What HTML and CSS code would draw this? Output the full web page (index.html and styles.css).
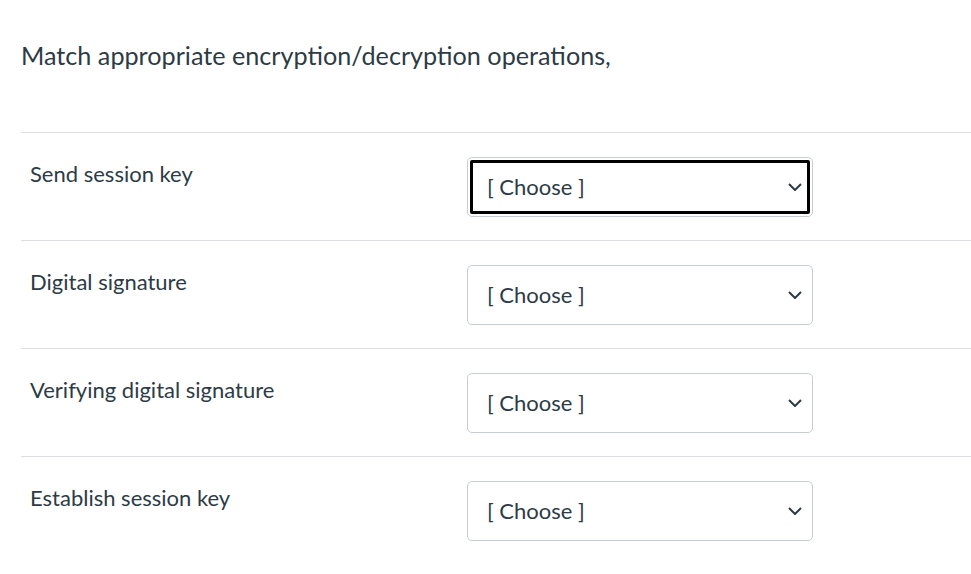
FILE: index.html
```html
<!DOCTYPE html>
<html lang="en">
<head>
    <meta charset="UTF-8">
    <meta name="viewport" content="width=device-width, initial-scale=1.0">
    <title>Matching question</title>
    <link rel="stylesheet" href="styles.css">
</head>
<body>
    <div class="question">
        <p class="question-text">Match appropriate encryption/decryption operations,</p>
        <div class="answers">
            <div class="answer">
                <div class="answer-label">Send session key</div>
                <select class="answer-select focused">
                    <option>[ Choose ]</option>
                </select>
            </div>
            <div class="answer">
                <div class="answer-label">Digital signature</div>
                <select class="answer-select">
                    <option>[ Choose ]</option>
                </select>
            </div>
            <div class="answer">
                <div class="answer-label">Verifying digital signature</div>
                <select class="answer-select">
                    <option>[ Choose ]</option>
                </select>
            </div>
            <div class="answer">
                <div class="answer-label">Establish session key</div>
                <select class="answer-select">
                    <option>[ Choose ]</option>
                </select>
            </div>
        </div>
    </div>
</body>
</html>
```

FILE: styles.css
```css
body {
    font-family: Lato, "Liberation Sans", sans-serif;
    color: #2d3b45;
    background-color: #fff;
    margin: 0;
    padding: 0;
}
.question {
    padding-left: 21px;
}
.question-text {
    font-size: 25.2px;
    margin: 0;
    padding-top: 40px;
    height: 132px;
    box-sizing: border-box;
}
.answers {
    margin-right: -10px;
}
.answer {
    display: flex;
    height: 108px;
    box-sizing: border-box;
    border-top: 1px solid #dcdfe2;
}
.answer-label {
    width: 446px;
    padding: 27px 0 0 9px;
    box-sizing: border-box;
    font-size: 22px;
}
.answer-select {
    appearance: none;
    margin-top: 24px;
    width: 346px;
    height: 60px;
    padding: 0 40px 2px 19px;
    font-family: Lato, "Liberation Sans", sans-serif;
    font-size: 22px;
    color: #2d3b45;
    background-color: #fff;
    border: 1px solid #c7cdd1;
    border-radius: 5px;
    background-image: url("data:image/svg+xml,%3Csvg xmlns='http://www.w3.org/2000/svg' width='14' height='8' viewBox='0 0 14 8'%3E%3Cpath d='M1 1 7 7l6-6' fill='none' stroke='%232d3b45' stroke-width='2'/%3E%3C/svg%3E");
    background-repeat: no-repeat;
    background-position: right 10px center;
}
.answer-select.focused {
    outline: 3px solid #000;
    outline-offset: -6px;
}
```
